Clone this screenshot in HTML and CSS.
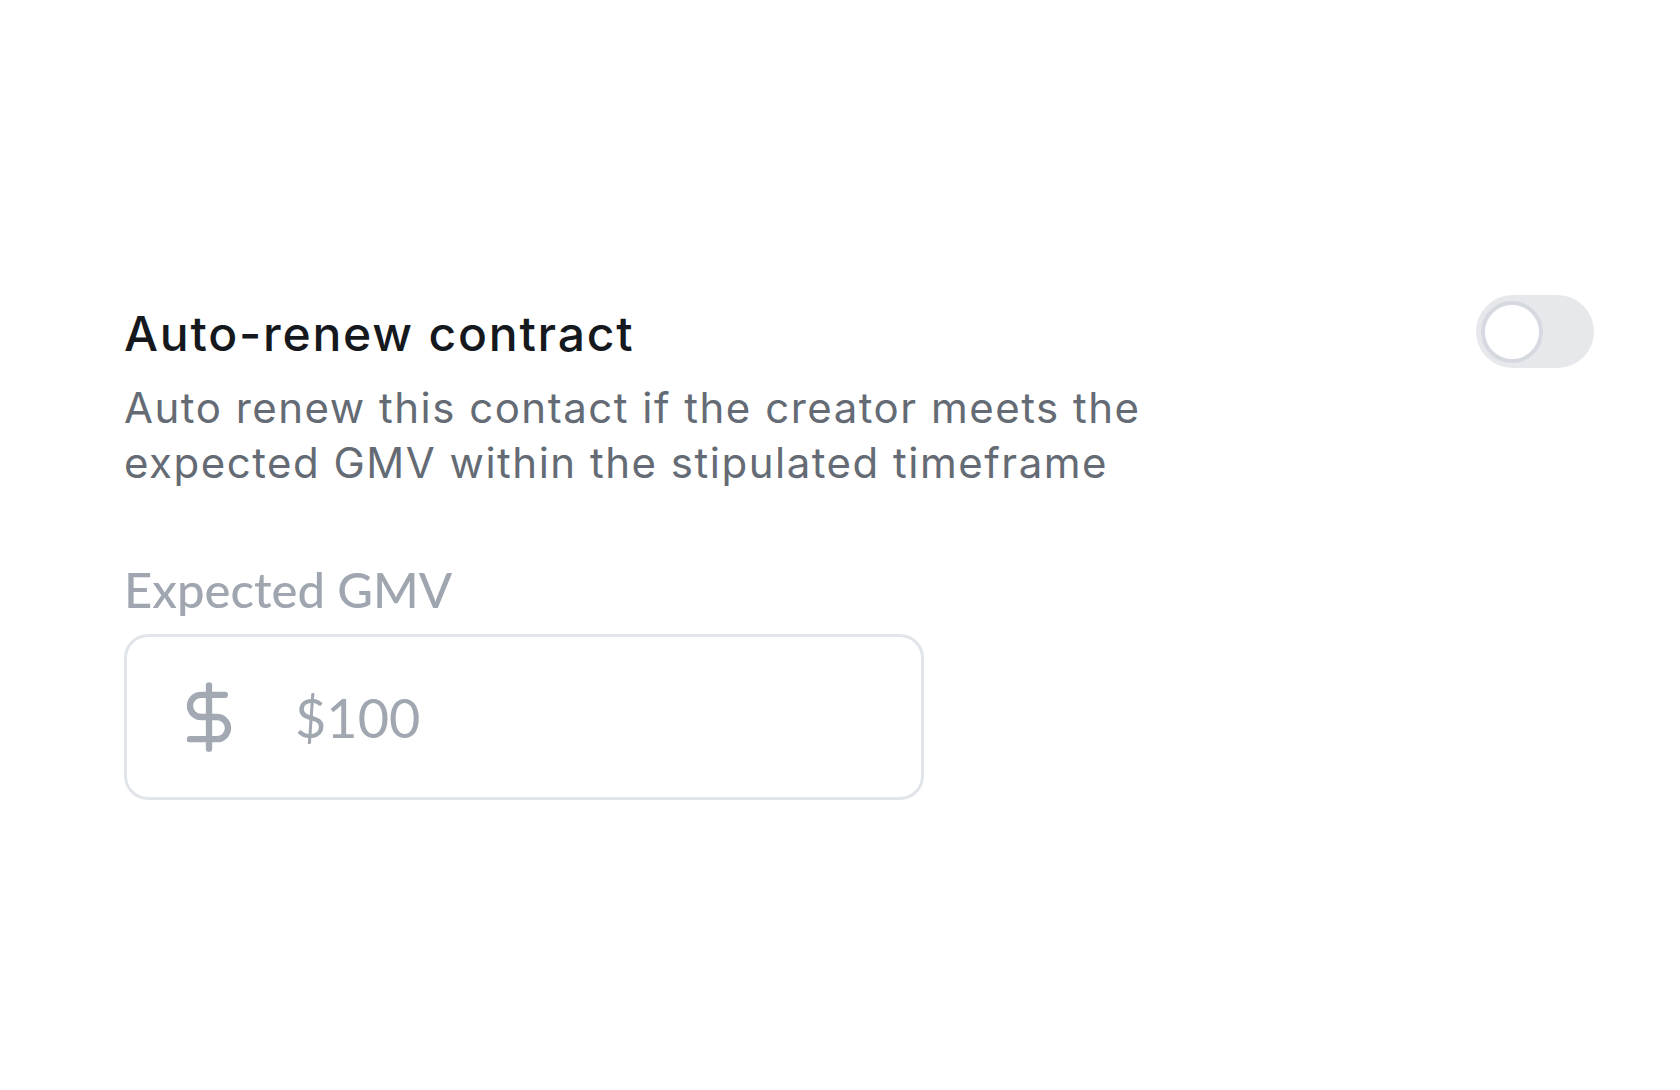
FILE: index.html
```html
<!DOCTYPE html>
<html lang="en">
<head>
<meta charset="utf-8">
<title>Auto-renew contract</title>
<link rel="stylesheet" href="styles.css">
</head>
<body>
<main class="page">
  <section class="setting">
    <div class="setting-text">
      <h2 class="setting-title">Auto-renew contract</h2>
      <p class="setting-desc">Auto renew this contact if the creator meets the<br>expected GMV within the stipulated timeframe</p>
    </div>
    <button class="toggle" type="button" aria-pressed="false" aria-label="Auto-renew contract">
      <span class="toggle-knob"></span>
    </button>
  </section>
  <div class="field">
    <label class="field-label" for="gmv">Expected GMV</label>
    <div class="input-box">
      <svg class="input-icon" viewBox="0 0 24 24" fill="none" stroke="currentColor" stroke-width="2" stroke-linecap="round" stroke-linejoin="round" aria-hidden="true">
        <line x1="12" y1="2" x2="12" y2="22"/>
        <path d="M17 5H9.5a3.5 3.5 0 0 0 0 7h5a3.5 3.5 0 0 1 0 7H6"/>
      </svg>
      <input id="gmv" class="input" type="text" placeholder="$100">
    </div>
  </div>
</main>
</body>
</html>
```
FILE: styles.css
```css
* { box-sizing: border-box; }

html, body {
  margin: 0;
  padding: 0;
  background: #ffffff;
}

body {
  font-family: Inter, "Liberation Sans", sans-serif;
}

.page {
  padding: 295px 86px 0 124px;
}

.setting {
  display: flex;
  justify-content: space-between;
  align-items: flex-start;
}

.setting-title {
  margin: 10px 0 0;
  font-size: 48px;
  line-height: 58px;
  font-weight: 500;
  letter-spacing: 1.8px;
  color: #15191e;
}

.setting-desc {
  margin: 17px 0 0;
  font-size: 42px;
  line-height: 55px;
  font-weight: 400;
  letter-spacing: 1.5px;
  color: #646b74;
}

.toggle {
  flex: none;
  width: 118px;
  height: 73px;
  padding: 0 0 0 5px;
  border: none;
  border-radius: 37px;
  background: #e6e8ec;
  display: flex;
  align-items: center;
  cursor: pointer;
}

.toggle-knob {
  width: 62px;
  height: 62px;
  border-radius: 50%;
  background: #ffffff;
  border: 4px solid #d6dae0;
}

.field {
  margin-top: 70px;
}

.field-label {
  display: block;
  font-family: Lato, "Liberation Sans", sans-serif;
  font-size: 49px;
  line-height: 59px;
  font-weight: 500;
  color: #a0a6b0;
}

.input-box {
  margin-top: 15px;
  width: 800px;
  height: 166px;
  border: 3px solid #e1e5ea;
  border-radius: 24px;
  display: flex;
  align-items: center;
  padding-left: 44px;
  gap: 48px;
}

.input-icon {
  width: 76px;
  height: 76px;
  flex: none;
  color: #a3a9b3;
}

.input {
  flex: 1;
  min-width: 0;
  border: none;
  outline: none;
  background: transparent;
  padding: 0;
  font-family: Lato, "Liberation Sans", sans-serif;
  font-size: 54px;
  color: #a1a7b0;
}

.input::placeholder {
  color: #a1a7b0;
  opacity: 1;
}
```
